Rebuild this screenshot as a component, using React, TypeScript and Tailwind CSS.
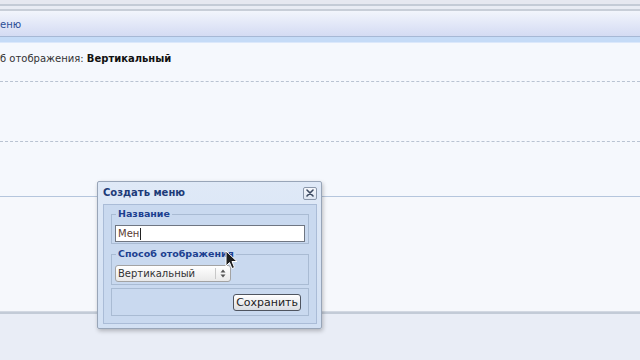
import React from "react";

const font = { fontFamily: '"DejaVu Sans", Verdana, sans-serif' };

const Cursor = () => (
  <svg
    className="absolute left-[225px] top-[250px]"
    width="14"
    height="21"
    viewBox="0 0 14 21"
  >
    <path
      d="M1 1 L1 16 L4.5 12.5 L7 18.5 L9.5 17.5 L7 11.5 L12 11.5 Z"
      fill="#1e1e1e"
      stroke="#ffffff"
      strokeWidth="1"
      strokeLinejoin="round"
    />
  </svg>
);

const CreateMenuDialog = () => {
  return (
    <div className="absolute left-[97px] top-[181px] w-[225px] h-[148px] border border-[#98a5b8] bg-gradient-to-b from-[#dfe9f7] to-[#d2e0f3] shadow-[1px_2px_4px_rgba(0,0,0,0.25)] rounded-[2px] flex flex-col">
      <div className="h-[22px] flex items-center justify-between pl-[5px] pr-[4px]">
        <span className="text-[10px] font-bold text-[#1d3b78] leading-none">
          Создать меню
        </span>
        <div className="w-[14px] h-[13px] border border-[#8a97aa] bg-gradient-to-b from-[#f6f8fc] to-[#dde5f1] rounded-[2px] flex items-center justify-center">
          <svg width="8" height="8" viewBox="0 0 8 8">
            <path
              d="M1 1 L7 7 M7 1 L1 7"
              stroke="#3c4a60"
              strokeWidth="1.6"
              strokeLinecap="round"
            />
          </svg>
        </div>
      </div>

      <div className="ml-[5px] mr-[4px] h-[120px] border border-[#aabcd7] bg-[#c9d9ef] px-[7px] flex flex-col">
        <fieldset className="mt-[3px] border border-[#a9bbd3] px-[3px] h-[36px]">
          <legend className="ml-[1px] px-[2px] text-[9.5px] font-bold text-[#1c3f8f] leading-[12px]">
            Название
          </legend>
          <div className="h-[17px] mt-[5px] bg-white border border-[#6f7682] flex items-center pl-[2px] text-[10px] text-[#5a3c33]">
            Мен
            <span className="inline-block w-[1px] h-[12px] bg-[#222] ml-[1px]" />
          </div>
        </fieldset>

        <fieldset className="mt-[4px] border border-[#a9bbd3] px-[3px] h-[37px]">
          <legend className="ml-[1px] px-[2px] text-[9.5px] font-bold text-[#1c3f8f] leading-[12px]">
            Способ отображения
          </legend>
          <div className="mt-[5px] w-[116px] h-[17px] border border-[#a3a3a3] rounded-[3px] bg-gradient-to-b from-[#ffffff] to-[#e9e9e9] flex items-center text-[10px] text-[#333]">
            <span className="pl-[2px] flex-1">Вертикальный</span>
            <div className="w-[1px] h-[11px] bg-[#c8c8c8]" />
            <svg className="mx-[4px]" width="6" height="9" viewBox="0 0 6 9">
              <path d="M0.5 3.5 L3 0.5 L5.5 3.5 Z" fill="#555" />
              <path d="M0.5 5.5 L3 8.5 L5.5 5.5 Z" fill="#555" />
            </svg>
          </div>
        </fieldset>

        <fieldset className="mt-[3px] border border-[#a9bbd3] h-[28px]">
          <div className="flex justify-end pt-[5px] pr-[7px]">
            <button className="h-[17px] px-[2px] border border-[#4f5560] rounded-[3px] bg-gradient-to-b from-[#ffffff] to-[#dadde2] text-[11px] text-[#222] leading-none">
              Сохранить
            </button>
          </div>
        </fieldset>
      </div>
    </div>
  );
};

export default function App() {
  return (
    <div
      className="relative w-[640px] h-[360px] overflow-hidden bg-[#f5f8fd] flex flex-col"
      style={font}
    >
      {/* top browser/page chrome stripes */}
      <div className="h-[4px] bg-[#e6e8f0]" />
      <div className="h-[2px] bg-[#c4cbd6]" />
      <div className="h-[3px] bg-[#e9ecf4]" />
      <div className="h-[2px] bg-[#c8ced8]" />

      {/* header bar */}
      <div className="h-[25px] bg-gradient-to-b from-[#f2f5fc] to-[#d4dbf3] flex items-center pt-[2px]">
        <span className="text-[10px] text-[#2d4f96]">еню</span>
      </div>
      <div className="h-[1px] bg-[#a6b8d5]" />
      <div className="h-[5px] bg-[#c5dbf7]" />
      <div className="h-[1px] bg-[#dbe8fb]" />

      {/* content */}
      <div className="flex-1 flex flex-col">
        <div className="h-[28px] flex items-center text-[10px] text-[#333] pt-[2px]">
          <span>б отображения:&nbsp;</span>
          <span className="font-bold text-[#111]">Вертикальный</span>
        </div>
        <div className="h-[10px]" />
        <div className="border-t border-dashed border-[#b9c3d2]" />
        <div className="h-[59px]" />
        <div className="border-t border-dashed border-[#b9c3d2]" />
        <div className="h-[54px]" />
        <div className="h-[1px] bg-[#b5c6dd]" />
        <div className="h-[114px] bg-[#f6f8fc]" />
        <div className="h-[1px] bg-[#d2d8e2]" />
        <div className="h-[2px] bg-[#c3cbd7]" />
        <div className="flex-1 bg-[#e9edf6]" />
      </div>

      <CreateMenuDialog />
      <Cursor />
    </div>
  );
}
